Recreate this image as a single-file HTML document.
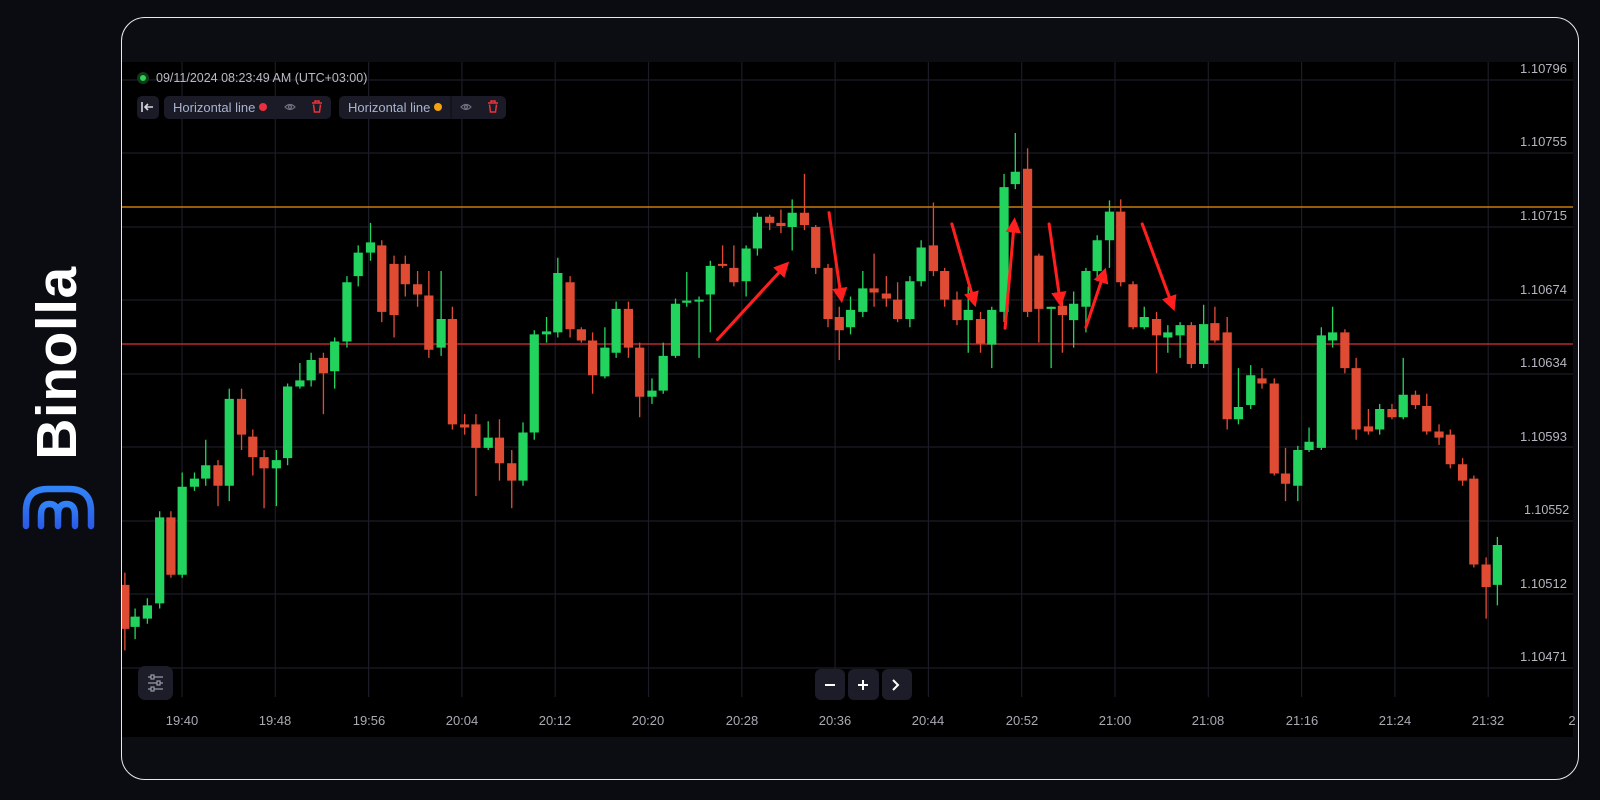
<!DOCTYPE html>
<html><head><meta charset="utf-8"><style>
html,body{margin:0;padding:0;background:#0b0c11;width:1600px;height:800px;overflow:hidden;font-family:"Liberation Sans",sans-serif}
.card{position:absolute;left:121px;top:17px;width:1456px;height:761px;border:1.5px solid #e8e8ee;border-radius:24px;background:#0c0d12;overflow:hidden}
.chart{position:absolute;left:122px;top:62px;width:1451px;height:675px;background:#000}
.logo{position:absolute;left:57px;top:363px;transform:translate(-50%,-50%) rotate(-90deg);color:#fff;font-weight:bold;font-size:57px;white-space:nowrap;letter-spacing:0.5px}
.btn{position:absolute;background:#1a1b26;border-radius:5px}
.t{position:absolute;color:#b5b6c0;font-size:13px}
</style></head><body>
<div class="card"></div>
<div class="chart"></div>
<div class="logo">Binolla</div>
<svg style="position:absolute;left:0;top:0" width="120" height="560">
<defs><linearGradient id="lg" x1="0" y1="0" x2="0" y2="1"><stop offset="0" stop-color="#3283f7"/><stop offset="1" stop-color="#2b5ce8"/></linearGradient></defs>
<g fill="none" stroke="url(#lg)" stroke-width="6.5" stroke-linecap="round">
<path d="M26 526 V511 Q26 489 48 489 H69 Q91 489 91 511 V526"/>
<path d="M41 526 V515 Q41 504 49.5 504 Q58 504 58 515 V526"/>
<path d="M58 515 Q58 504 66.5 504 Q75 504 75 515 V526"/>
</g></svg>

<svg style="position:absolute;left:0;top:0" width="1600" height="800">
<defs><marker id="ah" markerWidth="5" markerHeight="5" refX="3.5" refY="2.5" orient="auto" markerUnits="strokeWidth"><path d="M0 0 L5 2.5 L0 5 Z" fill="#ff1f1f"/></marker>
<clipPath id="cc"><rect x="122" y="62" width="1451" height="675"/></clipPath></defs>
<g clip-path="url(#cc)">
<g stroke="#1b1c27" stroke-width="1.2">
<path d="M122 80H1573M122 153H1573M122 227H1573M122 300H1573M122 374H1573M122 447H1573M122 521H1573M122 594H1573M122 668H1573"/>
<path d="M182 62V697M275.3 62V697M368.6 62V697M461.9 62V697M555.2 62V697M648.5 62V697M741.8 62V697M835.1 62V697M928.4 62V697M1021.7 62V697M1115 62V697M1208.3 62V697M1301.6 62V697M1394.9 62V697M1488.2 62V697"/>
</g>
<line x1="122" y1="207" x2="1573" y2="207" stroke="#c97a0c" stroke-width="1.6"/>
<line x1="122" y1="344" x2="1573" y2="344" stroke="#b8292c" stroke-width="1.6"/>
<g transform="scale(1.0235 1.0226)">
<path stroke="#22d35d" stroke-width="1.3" fill="none" d="M132 595V625M144 585V610M156 500V595M178 462V565M190 462V480M201 430V475M224 380V490M270 440V495M281 375V455M293 355V380M304 345V378M327 330V380M339 270V340M350 240V280M362 218V255M431 265V348M477 412V440M511 413V475M522 323V430M534 310V335M545 252V330M591 320V370M602 295V350M637 370V395M648 335V385M660 292V350M671 266V300M683 290V350M694 255V325M729 240V290M740 208V250M774 195V245M831 290V327M843 265V310M889 270V320M900 235V280M946 280V345M969 300V360M981 170V315M992 130V185M1027 300V360M1049 285V340M1061 262V325M1072 230V275M1084 196V262M1118 300V322M1141 318V345M1153 315V350M1176 298V360M1210 360V415M1222 357V400M1268 436V490M1279 418V442M1291 320V440M1302 300V340M1348 395V425M1371 350V410M1463 525V592"/>
<path fill="#22d35d" d="M127.5 603h9V613h-9ZM139.5 592h9V605h-9ZM151.5 506h9V590h-9ZM173.5 476h9V562h-9ZM185.5 468h9V476h-9ZM196.5 455h9V468h-9ZM219.5 390h9V475h-9ZM265.5 450h9V458h-9ZM276.5 378h9V448h-9ZM288.5 372h9V378h-9ZM299.5 352h9V372h-9ZM322.5 334h9V363h-9ZM334.5 276h9V334h-9ZM345.5 247h9V270h-9ZM357.5 237h9V247h-9ZM426.5 312h9V340h-9ZM472.5 428h9V438h-9ZM506.5 423h9V470h-9ZM517.5 327h9V423h-9ZM529.5 324h9V327h-9ZM540.5 267h9V325h-9ZM586.5 340h9V368h-9ZM597.5 302h9V345h-9ZM632.5 382h9V388h-9ZM643.5 348h9V382h-9ZM655.5 297h9V348h-9ZM666.5 294h9V296h-9ZM678.5 293h9V295h-9ZM689.5 260h9V288h-9ZM724.5 243h9V275h-9ZM735.5 212h9V243h-9ZM769.5 208h9V222h-9ZM826.5 303h9V320h-9ZM838.5 282h9V305h-9ZM884.5 275h9V312h-9ZM895.5 242h9V275h-9ZM941.5 303h9V313h-9ZM964.5 303h9V337h-9ZM976.5 183h9V305h-9ZM987.5 168h9V180h-9ZM1022.5 300h9V302h-9ZM1044.5 297h9V313h-9ZM1056.5 265h9V300h-9ZM1067.5 235h9V265h-9ZM1079.5 207h9V235h-9ZM1113.5 310h9V320h-9ZM1136.5 325h9V330h-9ZM1148.5 318h9V328h-9ZM1171.5 317h9V356h-9ZM1205.5 398h9V410h-9ZM1217.5 367h9V396h-9ZM1263.5 440h9V475h-9ZM1274.5 432h9V440h-9ZM1286.5 328h9V438h-9ZM1297.5 325h9V333h-9ZM1343.5 400h9V420h-9ZM1366.5 386h9V408h-9ZM1458.5 533h9V572h-9Z"/>
<path stroke="#e04b34" stroke-width="1.3" fill="none" d="M122 560V636M167 500V565M213 450V495M236 380V440M247 420V465M258 440V497M316 345V405M373 235V315M385 250V330M396 250V290M408 265V300M419 265V350M442 300V420M454 405V425M465 405V485M488 410V470M500 440V497M557 270V330M568 320V335M579 325V385M614 295V350M625 335V408M706 240V262M717 240V280M752 210V225M763 205V228M786 170V225M797 220V268M809 258V320M820 300V352M854 248V300M866 270V300M877 276V315M912 198V270M923 262V300M935 285V318M958 305V345M1004 145V310M1015 248V335M1038 285V345M1095 195V280M1107 275V322M1130 305V365M1164 315V360M1187 300V335M1199 310V420M1233 360V380M1245 370V465M1256 438V490M1314 322V365M1325 350V430M1337 400V425M1360 395V410M1383 382V400M1394 385V425M1406 415V435M1417 420V458M1429 448V475M1440 465V555M1452 545V605"/>
<path fill="#e04b34" d="M117.5 572h9V615h-9ZM162.5 506h9V562h-9ZM208.5 455h9V475h-9ZM231.5 390h9V425h-9ZM242.5 427h9V447h-9ZM253.5 447h9V458h-9ZM311.5 350h9V365h-9ZM368.5 240h9V305h-9ZM380.5 258h9V308h-9ZM391.5 258h9V278h-9ZM403.5 278h9V288h-9ZM414.5 289h9V342h-9ZM437.5 312h9V415h-9ZM449.5 415h9V418h-9ZM460.5 415h9V438h-9ZM483.5 428h9V453h-9ZM495.5 453h9V470h-9ZM552.5 276h9V322h-9ZM563.5 322h9V333h-9ZM574.5 333h9V367h-9ZM609.5 302h9V340h-9ZM620.5 340h9V388h-9ZM701.5 258h9V260h-9ZM712.5 262h9V276h-9ZM747.5 212h9V218h-9ZM758.5 218h9V221h-9ZM781.5 208h9V220h-9ZM792.5 222h9V262h-9ZM804.5 262h9V312h-9ZM815.5 310h9V323h-9ZM849.5 282h9V286h-9ZM861.5 287h9V292h-9ZM872.5 293h9V312h-9ZM907.5 240h9V265h-9ZM918.5 265h9V293h-9ZM930.5 293h9V313h-9ZM953.5 312h9V336h-9ZM999.5 165h9V305h-9ZM1010.5 250h9V302h-9ZM1033.5 299h9V308h-9ZM1090.5 207h9V276h-9ZM1102.5 278h9V320h-9ZM1125.5 312h9V328h-9ZM1159.5 318h9V356h-9ZM1182.5 316h9V333h-9ZM1194.5 325h9V410h-9ZM1228.5 370h9V375h-9ZM1240.5 375h9V463h-9ZM1251.5 463h9V473h-9ZM1309.5 325h9V360h-9ZM1320.5 360h9V420h-9ZM1332.5 417h9V422h-9ZM1355.5 400h9V408h-9ZM1378.5 386h9V396h-9ZM1389.5 397h9V422h-9ZM1401.5 422h9V428h-9ZM1412.5 425h9V454h-9ZM1424.5 454h9V470h-9ZM1435.5 468h9V552h-9ZM1447.5 552h9V574h-9Z"/>
<g stroke="#ff1f1f" stroke-width="3" stroke-linecap="round" fill="none" marker-end="url(#ah)">
<path d="M701 332L768 259"/><path d="M810 208L822 292"/><path d="M930 219L952 296"/><path d="M982 321L991 217"/><path d="M1025 219L1036 296"/><path d="M1061 320L1079 266"/><path d="M1116 219L1146 300"/>
</g>
</g>
</g>
<g fill="#b5b6c0" font-family="Liberation Sans" font-size="13">
<text x="1520" y="73">1.10796</text><text x="1520" y="146">1.10755</text><text x="1520" y="220">1.10715</text><text x="1520" y="294">1.10674</text><text x="1520" y="367">1.10634</text><text x="1520" y="441">1.10593</text><text x="1520" y="588">1.10512</text><text x="1520" y="661">1.10471</text>
<text x="1524" y="514" font-size="12.5">1.10552</text>
</g>
<g fill="#a9aab4" font-family="Liberation Sans" font-size="13" text-anchor="middle">
<text x="182" y="725">19:40</text><text x="275" y="725">19:48</text><text x="369" y="725">19:56</text><text x="462" y="725">20:04</text><text x="555" y="725">20:12</text><text x="648" y="725">20:20</text><text x="742" y="725">20:28</text><text x="835" y="725">20:36</text><text x="928" y="725">20:44</text><text x="1022" y="725">20:52</text><text x="1115" y="725">21:00</text><text x="1208" y="725">21:08</text><text x="1302" y="725">21:16</text><text x="1395" y="725">21:24</text><text x="1488" y="725">21:32</text><text x="1572" y="725">2</text>
</g>
<circle cx="143" cy="78" r="6" fill="#0f3a18"/><circle cx="143" cy="78" r="3" fill="#2fd158"/>
<text x="156" y="82" fill="#b9bac4" font-family="Liberation Sans" font-size="12.5">09/11/2024  08:23:49 AM  (UTC+03:00)</text>
</svg>

<div class="btn" style="left:137px;top:96px;width:22px;height:23px"></div>
<div class="btn" style="left:164px;top:96px;width:167px;height:23px"></div>
<div class="btn" style="left:339px;top:96px;width:167px;height:23px"></div>
<svg style="position:absolute;left:0;top:0" width="520" height="130">
<g stroke="#d8d8e0" stroke-width="1.6" fill="none"><path d="M142 102V112M153 107H145M148 104L145 107L148 110"/></g>
<g font-family="Liberation Sans" font-size="13" fill="#a9b3cf"><text x="173" y="112">Horizontal line</text><text x="348" y="112">Horizontal line</text></g>
<circle cx="263" cy="107" r="4" fill="#ee2e3e"/><circle cx="438" cy="107" r="4" fill="#f6a20c"/>
<g stroke="#6f7180" stroke-width="1.2" fill="none"><path d="M285 107Q290 102 295 107Q290 112 285 107Z"/><circle cx="290" cy="107" r="1.5"/><path d="M461 107Q466 102 471 107Q466 112 461 107Z"/><circle cx="466" cy="107" r="1.5"/></g>
<line x1="451" y1="96" x2="451" y2="119" stroke="#0c0d12"/>
<g stroke="#e9323d" stroke-width="1.5" fill="none"><path d="M312 103H322M315 103V101H319V103M313.5 104.5L314.5 112H319.5L320.5 104.5"/><path d="M488 103H498M491 103V101H495V103M489.5 104.5L490.5 112H495.5L496.5 104.5"/></g>
</svg>

<div class="btn" style="left:138px;top:666px;width:35px;height:34px;border-radius:7px;background:#1c1d28"></div>
<svg style="position:absolute;left:138px;top:666px" width="35" height="34"><g stroke="#9a9ba8" stroke-width="1.2" fill="none"><path d="M10 11H25M10 17H25M10 23H25"/><rect x="13" y="9" width="3" height="4" fill="#1c1d28"/><rect x="19" y="15" width="3" height="4" fill="#1c1d28"/><rect x="13" y="21" width="3" height="4" fill="#1c1d28"/></g></svg>
<div class="btn" style="left:815px;top:669px;width:30px;height:31px;border-radius:6px;background:#1c1d28"></div>
<div class="btn" style="left:848px;top:669px;width:31px;height:31px;border-radius:6px;background:#1c1d28"></div>
<div class="btn" style="left:882px;top:669px;width:30px;height:31px;border-radius:6px;background:#1c1d28"></div>
<svg style="position:absolute;left:815px;top:669px" width="100" height="31"><g stroke="#fff" stroke-width="2" fill="none"><path d="M10 16H20M43 16H53M48 11V21M78 11L83 16L78 21"/></g></svg>
</body></html>
